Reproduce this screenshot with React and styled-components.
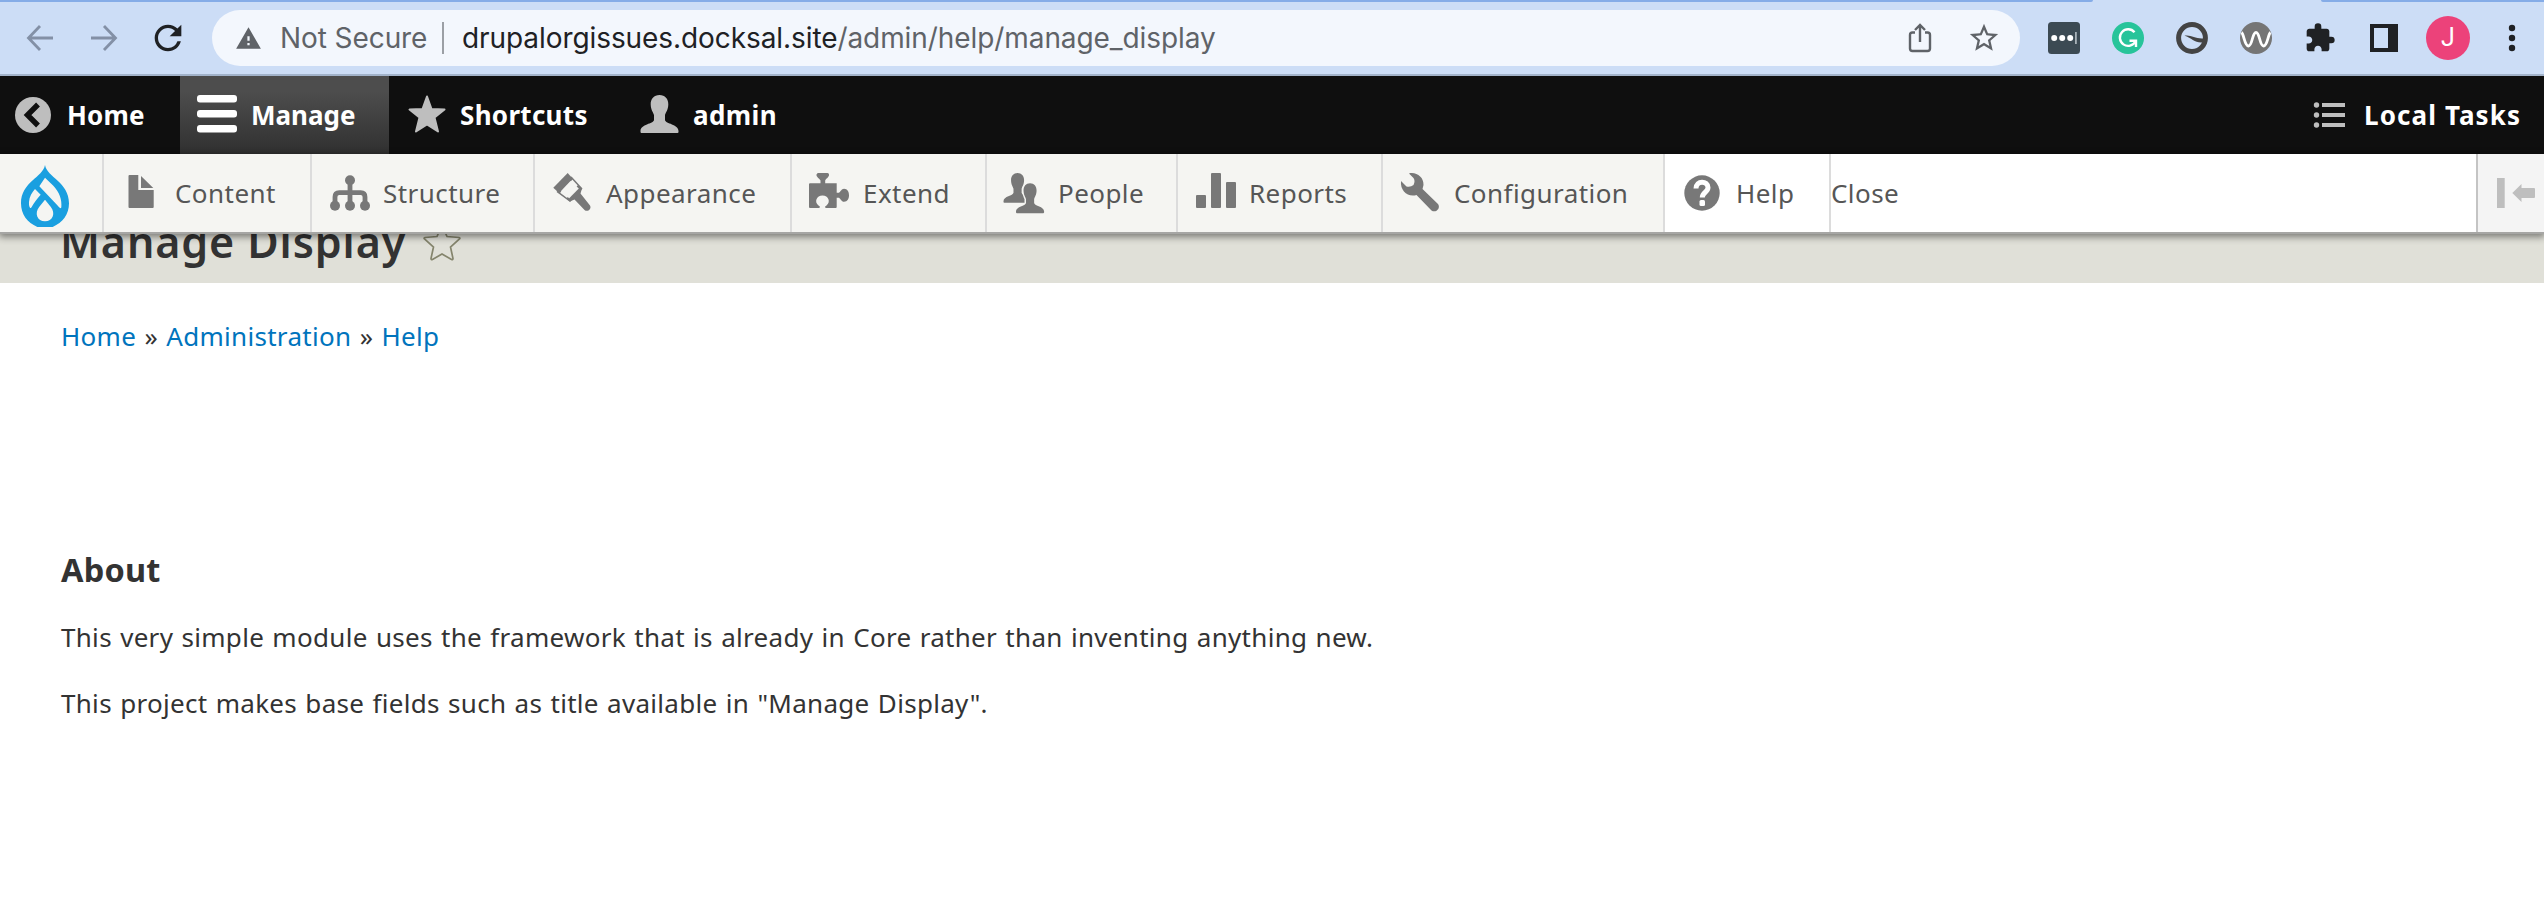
import styled, { createGlobalStyle, css } from "styled-components";
import { MdExtension, MdRefresh, MdStarBorder, MdWarning } from "react-icons/md";

const GlobalStyle = createGlobalStyle`
  * {
    box-sizing: border-box;
  }
  body {
    margin: 0;
    background: #fff;
    color: #333;
    font-family: "Noto Sans", "Open Sans", sans-serif;
    font-size: 26px;
    letter-spacing: 0.44px;
  }
  svg {
    display: block;
    flex-shrink: 0;
  }
`;

// Browser chrome
//
//

const Chrome = styled.header`
  height: 76px;
  background: #ccddf6;
  border-bottom: 2px solid #a2b3ca;
`;

const TabStrip = styled.div`
  display: flex;
  justify-content: space-between;
  height: 2px;
`;

const StripPart = styled.div`
  width: ${({ $width }) => $width}px;
  background: #85ace7;
  border-radius: ${({ $end }) => ($end ? "0 0 0 8px" : "0 0 8px 0")};
`;

const ChromeRow = styled.div`
  display: flex;
  align-items: center;
  height: 72px;
  padding-left: 8px;
`;

const ChromeButton = styled.span`
  display: flex;
  align-items: center;
  justify-content: center;
  width: 64px;
  color: ${({ $color }) => $color || "#1f2124"};
`;

const AddressBar = styled.div`
  display: flex;
  align-items: center;
  width: 1808px;
  height: 56px;
  margin: 0 12px;
  padding: 0 4px 0 23px;
  border-radius: 28px;
  background: #f3f7fd;
  color: #5f6368;
  font-family: Inter, Roboto, sans-serif;
  font-size: 28px;
  letter-spacing: -0.08px;
`;

const Security = styled.span`
  width: 162px;
  margin-left: 18px;
`;

const Separator = styled.span`
  width: 2px;
  height: 32px;
  margin-right: 18px;
  background: #9b9fa5;
`;

const Url = styled.span`
  flex: 1;
  b {
    color: #202124;
    font-weight: 400;
  }
`;

const Avatar = styled.span`
  width: 44px;
  height: 44px;
  border-radius: 50%;
  background: #ec427a;
  color: #fff;
  font: 25px/44px Roboto, sans-serif;
  text-align: center;
`;

// Admin toolbar
//
//

const Bar = styled.nav`
  display: flex;
  height: 78px;
  background: #0f0f0f;
  color: #fff;
  font-weight: 700;
`;

const BarTab = styled.a`
  display: flex;
  align-items: center;
  gap: 14px;
  width: ${({ $width }) => $width}px;
  padding-left: ${({ $inset }) => $inset || 17}px;
  letter-spacing: ${({ $tracking }) => $tracking}px;
  white-space: nowrap;
  ${({ $active }) =>
    $active &&
    css`
      background: linear-gradient(#4d4d4d 20%, #303030);
    `}
  ${({ $end }) =>
    $end &&
    css`
      margin-left: auto;
    `}
`;

const Tray = styled.nav`
  position: relative;
  z-index: 1;
  display: flex;
  height: 80px;
  background: #fff;
  border-bottom: 2px solid #a6a6a4;
  box-shadow: 0 2px 7px 1px rgba(0, 0, 0, 0.45);
  color: #565656;
`;

const TrayItem = styled.a`
  display: flex;
  align-items: center;
  gap: 14px;
  width: ${({ $width }) => $width}px;
  padding-left: 17px;
  border-right: 2px solid #dcdcdc;
  background: ${({ $active }) => ($active ? "#fff" : "#f5f5f2")};
`;

const LogoItem = styled(TrayItem)`
  padding: 6px 0 0 21px;
`;

const Close = styled.span`
  flex: 1;
  align-self: center;
`;

const Orientation = styled.span`
  display: flex;
  align-items: center;
  width: 68px;
  padding-left: 19px;
  border-left: 2px solid #c4c4c4;
  background: #f4f4f4;
`;

// Page
//
//

const PageHeader = styled.div`
  height: 49px;
  padding-left: 60px;
  background: #e0e0d8;
`;

// The title is scrolled partly under the tray
const TitleRow = styled.div`
  display: flex;
  align-items: center;
  height: 60px;
  transform: translateY(-22px);
`;

const Title = styled.h1`
  width: 363px;
  margin: 0;
  font-size: 43px;
  font-weight: 600;
  letter-spacing: 0.9px;
  line-height: 60px;
  white-space: nowrap;
`;

const Content = styled.main`
  padding: 33px 61px;
  letter-spacing: 0.3px;
  line-height: 40px;
  word-spacing: 1.2px;
`;

const Breadcrumb = styled.div`
  a {
    color: #0074bd;
  }
`;

const Heading = styled.h3`
  margin: 194px 0 27px;
  font-size: 32.5px;
  font-weight: 700;
  letter-spacing: 0.2px;
  line-height: 40px;
`;

const Text = styled.p`
  margin: 0 0 26px;
`;

// Icons
//
//

const Icon = ({ children, fill = "#787878", size = 40 }) => (
  <svg width={size} height={size} viewBox={`0 0 ${size} ${size}`} fill={fill} overflow="visible">
    {children}
  </svg>
);

const person =
  "M19 0C24.5 0 28 4 27.8 9.5 27.6 15 25.5 17 24.5 20V25C25 29 38 29 38 36V37Q38 38 37 38H1Q0 38 0 37V36C0 29 13 29 13.5 25V20C12.5 17 10.4 15 10.2 9.5 10 4 13.5 0 19 0z";

const Arrow = ({ flip }) => (
  <svg width="28" height="28" viewBox="0 0 28 28" fill="none" stroke="#8390a6" strokeWidth="2.8">
    <path
      d="M27 14H3M14 2 2.5 14 14 26"
      transform={flip ? "translate(28 0) scale(-1 1)" : undefined}
    />
  </svg>
);

const Share = () => (
  <svg width="24" height="30" viewBox="0 0 24 30" fill="none" stroke="#5f6368" strokeWidth="2.4">
    <path d="M7 9.5H4.5Q2 9.5 2 12V25.5Q2 28 4.5 28H19.5Q22 28 22 25.5V12Q22 9.5 19.5 9.5H17M12 19V3M7 7 12 2 17 7" />
  </svg>
);

const Password = () => (
  <Icon size={32} fill="#fff">
    <rect width="32" height="32" rx="3.5" fill="#3c4a53" />
    <circle cx="6.2" cy="16" r="3" />
    <circle cx="14.2" cy="16" r="3" />
    <circle cx="22.2" cy="16" r="3" />
    <rect x="27" y="10" width="1.8" height="12" fill="#a9b2b8" />
  </Icon>
);

const Grammar = () => (
  <Icon size={32} fill="none">
    <circle cx="16" cy="16" r="16" fill="#27c49a" />
    <path d="M22.5 10.2A8.3 8.3 0 1 0 23.5 19.5" stroke="#fff" strokeWidth="2.4" />
    <path d="M17.5 18.7H24V25" stroke="#fff" strokeWidth="2.4" />
  </Icon>
);

const Swoosh = () => (
  <Icon size={32} fill="#444">
    <circle cx="16" cy="16" r="13.4" fill="none" stroke="#444" strokeWidth="5" />
    <path d="M8.5 13.8C15 12.5 19 17 27 16.5V20.5C19 21.5 16 16 8.5 13.8z" />
  </Icon>
);

const Wave = () => (
  <Icon size={32} fill="none">
    <circle cx="16" cy="16" r="16" fill="#757575" />
    <path
      d="M1.5 10.5C4 12 4.5 24 8.5 24S12 10.5 16 10.5 19.5 24 23.5 24 28 12 30.5 10.5"
      stroke="#fff"
      strokeWidth="2.8"
    />
  </Icon>
);

const SidePanel = () => (
  <Icon size={28} fill="#1f2124">
    <path fillRule="evenodd" d="M0 0H28V28H0zM4 4V24H18V4z" />
  </Icon>
);

const Dots = () => (
  <Icon size={28} fill="#1f2124">
    <circle cx="14" cy="4" r="3.2" />
    <circle cx="14" cy="14" r="3.2" />
    <circle cx="14" cy="24" r="3.2" />
  </Icon>
);

const Back = () => (
  <Icon fill="#bebebe">
    <circle cx="20" cy="20" r="18" />
    <path d="M25 9.5 14.5 20 25 30.5" fill="none" stroke="#0f0f0f" strokeWidth="5.4" />
  </Icon>
);

const Hamburger = () => (
  <Icon fill="#fff">
    <rect y="0" width="40" height="7.5" rx="3" />
    <rect y="15" width="40" height="7.5" rx="3" />
    <rect y="30" width="40" height="7.5" rx="3" />
  </Icon>
);

const Star = () => (
  <Icon fill="#bebebe">
    <path
      d="M21 1.5 25.5 14 38.5 14.5 28.5 22.5 32 36.5 21 29.5 10 36.5 13.5 22.5 3.5 14.5 16.5 14z"
      stroke="#bebebe"
      strokeWidth="2"
      strokeLinejoin="round"
    />
  </Icon>
);

const User = () => (
  <Icon fill="#bebebe">
    <path d={person} transform="translate(1.5 0)" />
  </Icon>
);

const List = () => (
  <Icon fill="#bebebe">
    {[10, 20, 30].map((y) => (
      <g key={y}>
        <circle cx="6.5" cy={y} r="2.7" />
        <rect x="12" y={y - 2} width="23" height="4" />
      </g>
    ))}
  </Icon>
);

const Drop = () => (
  <svg width="48" height="62" viewBox="63 255 144 186">
    <path
      fill="#1a9fe0"
      d="M135 255C141 292 207 306 207 370 207 404 188 428 158 441H112C82 428 63 404 63 370 63 306 129 292 135 255z"
    />
    <path
      fill="#f5f5f2"
      d="M135 293 160 317C178 336 186 358 184 382 182 388 177 382 172 376L118 319zM105 327 122 344C112 356 100 370 95 381 91 389 86 380 87 366 88 350 96 337 105 327zM135 359 152 380C168 400 158 424 135 424 112 424 102 400 118 380z"
    />
  </svg>
);

const File = () => (
  <Icon>
    <path d="M8.5 2H17.3V17H32.7V34Q32.7 35 31.7 35H8.5Q7.5 35 7.5 34V3Q7.5 2 8.5 2zM20 3 32.3 15H20z" />
  </Icon>
);

const Structure = () => (
  <Icon>
    <circle cx="21" cy="7.3" r="5" />
    <circle cx="6" cy="32.7" r="5" />
    <circle cx="21" cy="32.7" r="5" />
    <circle cx="36" cy="32.7" r="5" />
    <path
      d="M6 32V24Q6 19.7 10.3 19.7H31.7Q36 19.7 36 24V32M21 7V32"
      fill="none"
      stroke="#787878"
      strokeWidth="4.8"
    />
  </Icon>
);

const Brush = () => (
  <Icon>
    <path d="M15.7 0 1.3 14.7 7.5 20.5 21 6z" />
    <path d="M5 18.3 18 28 29.5 15.5 19 4" fill="none" stroke="#787878" strokeWidth="1.5" />
    <path d="M17.7 28.5 14.5 25.5 26 12 30 15.5 28.5 20.5 38 32.5C40 36 35.5 39.5 32.5 37L22.5 26.5z" />
    <path fill="#f5f5f2" d="M8.800 18.200 18.500 8 26.800 15.500 17.200 25.300z" />
  </Icon>
);

const Puzzle = () => (
  <Icon>
    <path d="M1 10.3H11.5V7.5C11 6 7 4 7.5 1.5Q8 0 9 0H18.5Q20 0 20 1.5C20.5 4 16.5 6 16.2 7.5V10.3H27.7V19.7H30C31.5 19 32.5 15.8 35 15.8 38.5 15.8 40 19 40 22.3S38.5 28.8 35 28.8C32.5 28.8 31.5 25.5 30 24.7H27.7V34Q27.7 35 26.7 35H18C15.5 35 15.5 33.5 17.5 32.5 22 29 19.5 22.5 13.5 22.5S5 29 9.5 32.5C11.5 33.5 11.5 35 9 35H1Q0 35 0 34V11.3Q0 10.3 1 10.3z" />
  </Icon>
);

const People = () => (
  <Icon>
    <path d={person} transform="translate(-.5 0) scale(.74 .785)" />
    <path
      d={person}
      transform="translate(12 10.3) scale(.74 .785)"
      stroke="#f5f5f2"
      strokeWidth="4"
      paintOrder="stroke"
    />
  </Icon>
);

const Chart = () => (
  <Icon>
    <rect x="1" y="22" width="10" height="13" rx="1" />
    <rect x="16" y="0" width="10" height="35" rx="1" />
    <rect x="31" y="9" width="10" height="26" rx="1" />
  </Icon>
);

const Wrench = () => (
  <Icon>
    <path d="M9 .5C16-1.5 24 4 23.5 12L22.5 16 38 31C41 35 36 40.5 31.5 37.5L16.5 22C8 24.5 0 18 1 8L6.5 13.5Q10.5 14.5 13.5 12 15.5 8 13.5 5z" />
  </Icon>
);

const Help = () => (
  <Icon>
    <circle cx="20" cy="20" r="17.7" />
    <path
      d="M14 15.5C14 7 26 7.5 26 14.5 26 19.5 20.3 19 20.3 24.5"
      fill="none"
      stroke="#fff"
      strokeWidth="5"
    />
    <rect x="17.5" y="27" width="5.5" height="6" rx="1.5" fill="#fff" />
  </Icon>
);

const Collapse = () => (
  <Icon fill="#bebebe">
    <rect x="0" y="5" width="7.7" height="30" />
    <path d="M15.3 20 24.5 11V15H37Q38 15 38 16V24Q38 25 37 25H24.5V29z" />
  </Icon>
);

const TitleStar = () => (
  <svg width="38" height="38" viewBox="0 0 38 38" fill="none" stroke="#85856d" strokeWidth="1.7">
    <path d="M19 2 24 13.500 36 14.500Q37.500 15 36.500 16L27.500 24 30 35.500Q30 37 28.500 36.500L19 31 9.500 36.500Q8 37 8 35.500L10.500 24 1.500 16Q.500 15 2 14.500L14 13.500z" />
  </svg>
);

const trayItems = [
  { label: "Content", width: 208, icon: <File /> },
  { label: "Structure", width: 223, icon: <Structure /> },
  { label: "Appearance", width: 257, icon: <Brush /> },
  { label: "Extend", width: 195, icon: <Puzzle /> },
  { label: "People", width: 191, icon: <People /> },
  { label: "Reports", width: 205, icon: <Chart /> },
  { label: "Configuration", width: 282, icon: <Wrench /> },
  { label: "Help", width: 166, icon: <Help />, active: true },
];

export default function App() {
  return (
    <>
      <GlobalStyle />
      <Chrome>
        <TabStrip>
          <StripPart $width={2093} />
          <StripPart $width={223} $end />
        </TabStrip>
        <ChromeRow>
          <ChromeButton><Arrow /></ChromeButton>
          <ChromeButton><Arrow flip /></ChromeButton>
          <ChromeButton><MdRefresh size={40} /></ChromeButton>
          <AddressBar>
            <MdWarning size={27} />
            <Security>Not Secure</Security>
            <Separator />
            <Url><b>drupalorgissues.docksal.site</b>/admin/help/manage_display</Url>
            <ChromeButton $color="#5f6368"><Share /></ChromeButton>
            <ChromeButton $color="#5f6368"><MdStarBorder size={34} /></ChromeButton>
          </AddressBar>
          <ChromeButton><Password /></ChromeButton>
          <ChromeButton><Grammar /></ChromeButton>
          <ChromeButton><Swoosh /></ChromeButton>
          <ChromeButton><Wave /></ChromeButton>
          <ChromeButton><MdExtension size={32} /></ChromeButton>
          <ChromeButton><SidePanel /></ChromeButton>
          <ChromeButton><Avatar>J</Avatar></ChromeButton>
          <ChromeButton><Dots /></ChromeButton>
        </ChromeRow>
      </Chrome>

      <Bar>
        <BarTab $width={180} $inset={13} $tracking={0.2}><Back />Home</BarTab>
        <BarTab $width={209} $tracking={0} $active><Hamburger />Manage</BarTab>
        <BarTab $width={233} $tracking={0.3}><Star />Shortcuts</BarTab>
        <BarTab $width={200} $tracking={0.4}><User />admin</BarTab>
        <BarTab $width={251} $tracking={1.1} $end><List />Local Tasks</BarTab>
      </Bar>

      <Tray>
        <LogoItem $width={104}><Drop /></LogoItem>
        {trayItems.map(({ label, width, icon, active }) => (
          <TrayItem key={label} $width={width} $active={active}>
            {icon}
            {label}
          </TrayItem>
        ))}
        <Close>Close</Close>
        <Orientation><Collapse /></Orientation>
      </Tray>

      <PageHeader>
        <TitleRow>
          <Title>Manage Display</Title>
          <TitleStar />
        </TitleRow>
      </PageHeader>

      <Content>
        <Breadcrumb>
          <a>Home</a> » <a>Administration</a> » <a>Help</a>
        </Breadcrumb>
        <Heading>About</Heading>
        <Text>
          This very simple module uses the framework that is already in Core rather than inventing
          anything new.
        </Text>
        <Text>This project makes base fields such as title available in "Manage Display".</Text>
      </Content>
    </>
  );
}
